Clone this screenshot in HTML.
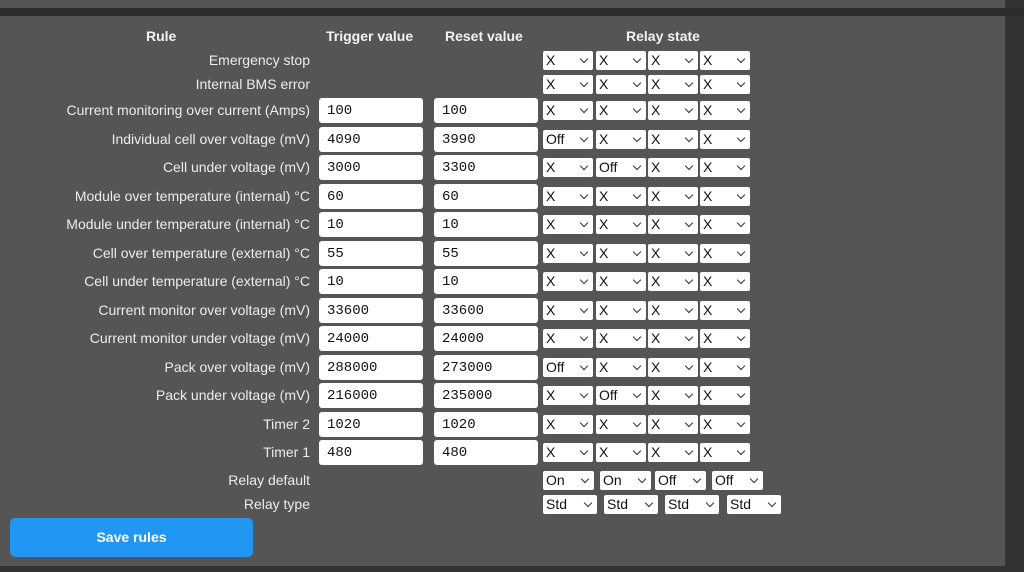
<!DOCTYPE html>
<html><head><meta charset="utf-8"><style>
*{box-sizing:border-box;margin:0;padding:0}
body{width:1024px;height:572px;overflow:hidden;background:#333;font-family:"Liberation Sans",sans-serif;position:relative}
.top{position:absolute;left:0;top:0;width:1005px;height:8px;background:#555}
.bar{position:absolute;left:0;top:8px;width:1024px;height:8px;background:#2c2c2c}
.panel{position:absolute;left:0;top:16px;width:1005px;height:550px;background:#555}
.h{position:absolute;top:28px;color:#f2f2f2;font-weight:bold;font-size:14px}
.l{position:absolute;right:714px;color:#ececec;font-size:14px;white-space:nowrap;line-height:18px}
.in{position:absolute;height:25px;width:104px;background:#fff;border-radius:3px;font-family:"Liberation Mono","DejaVu Sans Mono",monospace;font-size:14px;color:#111;padding:5px 0 0 8px}
.s{position:absolute;height:19px;background:#fff;border-radius:2px;font-size:14px;color:#111;padding:1px 0 0 3px;line-height:17px}
.s:after{content:"";position:absolute;right:6px;top:5px;width:5px;height:5px;border-right:1.3px solid #333;border-bottom:1.3px solid #333;transform:rotate(45deg)}
.btn{position:absolute;left:10px;top:518px;width:243px;height:39px;background:#2196f3;border-radius:5px;color:#fff;font-weight:bold;font-size:14px;text-align:center;line-height:39px}
</style></head><body>
<div class="top"></div><div class="bar"></div><div class="panel"></div>
<div class="h" style="left:146px">Rule</div>
<div class="h" style="left:326px">Trigger value</div>
<div class="h" style="left:445px">Reset value</div>
<div class="h" style="left:626px">Relay state</div>

<div class="l" style="top:51px">Emergency stop</div>
<div class="s" style="left:543px;top:51px;width:50px">X</div><div class="s" style="left:596px;top:51px;width:50px">X</div><div class="s" style="left:648px;top:51px;width:50px">X</div><div class="s" style="left:700px;top:51px;width:50px">X</div>
<div class="l" style="top:75px">Internal BMS error</div>
<div class="s" style="left:543px;top:75px;width:50px">X</div><div class="s" style="left:596px;top:75px;width:50px">X</div><div class="s" style="left:648px;top:75px;width:50px">X</div><div class="s" style="left:700px;top:75px;width:50px">X</div>

<div class="l" style="top:101px">Current monitoring over current (Amps)</div><div class="in" style="left:319px;top:98px">100</div><div class="in" style="left:434px;top:98px">100</div>
<div class="s" style="left:543px;top:101px;width:50px">X</div><div class="s" style="left:596px;top:101px;width:50px">X</div><div class="s" style="left:648px;top:101px;width:50px">X</div><div class="s" style="left:700px;top:101px;width:50px">X</div>

<div class="l" style="top:130px">Individual cell over voltage (mV)</div><div class="in" style="left:319px;top:127px">4090</div><div class="in" style="left:434px;top:127px">3990</div>
<div class="s" style="left:543px;top:130px;width:50px">Off</div><div class="s" style="left:596px;top:130px;width:50px">X</div><div class="s" style="left:648px;top:130px;width:50px">X</div><div class="s" style="left:700px;top:130px;width:50px">X</div>

<div class="l" style="top:158px">Cell under voltage (mV)</div><div class="in" style="left:319px;top:155px">3000</div><div class="in" style="left:434px;top:155px">3300</div>
<div class="s" style="left:543px;top:158px;width:50px">X</div><div class="s" style="left:596px;top:158px;width:50px">Off</div><div class="s" style="left:648px;top:158px;width:50px">X</div><div class="s" style="left:700px;top:158px;width:50px">X</div>

<div class="l" style="top:187px">Module over temperature (internal) °C</div><div class="in" style="left:319px;top:184px">60</div><div class="in" style="left:434px;top:184px">60</div>
<div class="s" style="left:543px;top:187px;width:50px">X</div><div class="s" style="left:596px;top:187px;width:50px">X</div><div class="s" style="left:648px;top:187px;width:50px">X</div><div class="s" style="left:700px;top:187px;width:50px">X</div>

<div class="l" style="top:215px">Module under temperature (internal) °C</div><div class="in" style="left:319px;top:212px">10</div><div class="in" style="left:434px;top:212px">10</div>
<div class="s" style="left:543px;top:215px;width:50px">X</div><div class="s" style="left:596px;top:215px;width:50px">X</div><div class="s" style="left:648px;top:215px;width:50px">X</div><div class="s" style="left:700px;top:215px;width:50px">X</div>

<div class="l" style="top:244px">Cell over temperature (external) °C</div><div class="in" style="left:319px;top:241px">55</div><div class="in" style="left:434px;top:241px">55</div>
<div class="s" style="left:543px;top:244px;width:50px">X</div><div class="s" style="left:596px;top:244px;width:50px">X</div><div class="s" style="left:648px;top:244px;width:50px">X</div><div class="s" style="left:700px;top:244px;width:50px">X</div>

<div class="l" style="top:272px">Cell under temperature (external) °C</div><div class="in" style="left:319px;top:269px">10</div><div class="in" style="left:434px;top:269px">10</div>
<div class="s" style="left:543px;top:272px;width:50px">X</div><div class="s" style="left:596px;top:272px;width:50px">X</div><div class="s" style="left:648px;top:272px;width:50px">X</div><div class="s" style="left:700px;top:272px;width:50px">X</div>

<div class="l" style="top:301px">Current monitor over voltage (mV)</div><div class="in" style="left:319px;top:298px">33600</div><div class="in" style="left:434px;top:298px">33600</div>
<div class="s" style="left:543px;top:301px;width:50px">X</div><div class="s" style="left:596px;top:301px;width:50px">X</div><div class="s" style="left:648px;top:301px;width:50px">X</div><div class="s" style="left:700px;top:301px;width:50px">X</div>

<div class="l" style="top:329px">Current monitor under voltage (mV)</div><div class="in" style="left:319px;top:326px">24000</div><div class="in" style="left:434px;top:326px">24000</div>
<div class="s" style="left:543px;top:329px;width:50px">X</div><div class="s" style="left:596px;top:329px;width:50px">X</div><div class="s" style="left:648px;top:329px;width:50px">X</div><div class="s" style="left:700px;top:329px;width:50px">X</div>

<div class="l" style="top:358px">Pack over voltage (mV)</div><div class="in" style="left:319px;top:355px">288000</div><div class="in" style="left:434px;top:355px">273000</div>
<div class="s" style="left:543px;top:358px;width:50px">Off</div><div class="s" style="left:596px;top:358px;width:50px">X</div><div class="s" style="left:648px;top:358px;width:50px">X</div><div class="s" style="left:700px;top:358px;width:50px">X</div>

<div class="l" style="top:386px">Pack under voltage (mV)</div><div class="in" style="left:319px;top:383px">216000</div><div class="in" style="left:434px;top:383px">235000</div>
<div class="s" style="left:543px;top:386px;width:50px">X</div><div class="s" style="left:596px;top:386px;width:50px">Off</div><div class="s" style="left:648px;top:386px;width:50px">X</div><div class="s" style="left:700px;top:386px;width:50px">X</div>

<div class="l" style="top:415px">Timer 2</div><div class="in" style="left:319px;top:412px">1020</div><div class="in" style="left:434px;top:412px">1020</div>
<div class="s" style="left:543px;top:415px;width:50px">X</div><div class="s" style="left:596px;top:415px;width:50px">X</div><div class="s" style="left:648px;top:415px;width:50px">X</div><div class="s" style="left:700px;top:415px;width:50px">X</div>

<div class="l" style="top:443px">Timer 1</div><div class="in" style="left:319px;top:440px">480</div><div class="in" style="left:434px;top:440px">480</div>
<div class="s" style="left:543px;top:443px;width:50px">X</div><div class="s" style="left:596px;top:443px;width:50px">X</div><div class="s" style="left:648px;top:443px;width:50px">X</div><div class="s" style="left:700px;top:443px;width:50px">X</div>

<div class="l" style="top:471px">Relay default</div>
<div class="s" style="left:543px;top:471px;width:51px">On</div><div class="s" style="left:600px;top:471px;width:51px">On</div><div class="s" style="left:655px;top:471px;width:51px">Off</div><div class="s" style="left:712px;top:471px;width:51px">Off</div>
<div class="l" style="top:495px">Relay type</div>
<div class="s" style="left:543px;top:495px;width:54px">Std</div><div class="s" style="left:604px;top:495px;width:54px">Std</div><div class="s" style="left:665px;top:495px;width:54px">Std</div><div class="s" style="left:727px;top:495px;width:54px">Std</div>

<div class="btn">Save rules</div>
</body></html>
